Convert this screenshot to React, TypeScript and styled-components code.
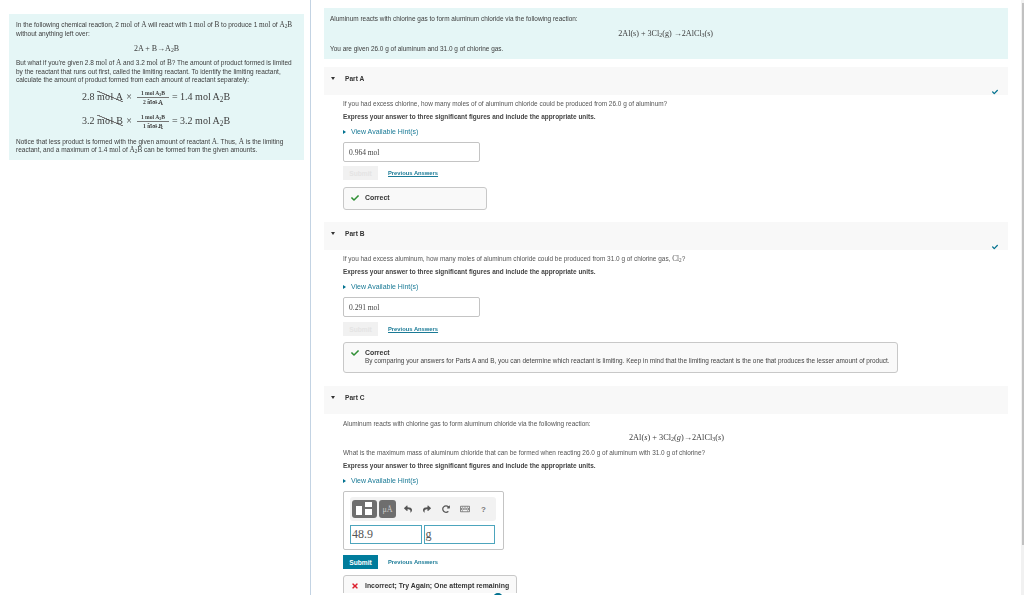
import React from "react";
import styled, { createGlobalStyle } from "styled-components";
import { FaCheck, FaTimes, FaReply, FaShare, FaRedoAlt, FaKeyboard } from "react-icons/fa";

const Global = createGlobalStyle`
  html, body { margin: 0; padding: 0; background: #fff; overflow: hidden; }
  #root { width: 1024px; height: 595px; overflow: hidden; }
  sub { font-size: 0.72em; line-height: 0; vertical-align: -0.25em; }
`;

const sans = `"Liberation Sans", Arial, sans-serif`;
const serif = `"Liberation Serif", "Times New Roman", serif`;

const Page = styled.div`
  position: relative;
  display: flex;
  width: 1024px;
  height: 595px;
  overflow: hidden;
  background: #fff;
  font-family: ${sans};
  color: #3c3c3c;
`;

const LeftCol = styled.aside`
  flex: 0 0 311px;
  box-sizing: border-box;
  border-right: 1px solid #c3d3e3;
  padding: 14px 6px 0 9px;
`;

const HintPanel = styled.div`
  box-sizing: border-box;
  height: 146px;
  background: #e5f6f6;
  padding: 7px 7px;
  font-size: 6.5px;
  line-height: 8.5px;
  filter: blur(0.3px);
`;

const PanelText = styled.div<{ $top?: number }>`
  margin: ${(p) => p.$top ?? 0}px 0 0;
`;

const PanelLine = styled.div`
  white-space: nowrap;
  height: 8.5px;
`;

const Serif = styled.span`
  font-family: ${serif};
  font-size: 1.12em;
`;

const CenterEq = styled.div`
  font-family: ${serif};
  font-size: 8px;
  line-height: 10px;
  text-align: center;
  margin: 6px 0 5px;
`;

const MathRow = styled.div<{ $top: number }>`
  display: flex;
  align-items: center;
  height: 24px;
  margin-top: ${(p) => p.$top}px;
  padding-left: 66px;
  gap: 3px;
  font-family: ${serif};
  font-size: 10px;
`;

const Struck = styled.span`
  letter-spacing: 0.3px;
  background: linear-gradient(to top right, transparent 47%, #777 48.5%, #777 52.5%, transparent 54%);
`;

const Frac = styled.span`
  display: inline-flex;
  flex-direction: column;
  align-items: center;
  font-size: 5.6px;
  line-height: 8px;
  font-weight: bold;
  margin-left: 2px;
`;

const FracTop = styled.span`
  border-bottom: 1px solid #777;
  padding: 0 4px;
`;

const Main = styled.main`
  flex: 1;
  min-width: 0;
  padding: 8px 16px 0 13px;
`;

const IntroPanel = styled.div`
  box-sizing: border-box;
  height: 51px;
  background: #e5f6f6;
  padding: 6px 6px;
  font-size: 6.45px;
  line-height: 9px;
  filter: blur(0.3px);
`;

const IntroEq = styled.div`
  font-family: ${serif};
  font-size: 8.1px;
  line-height: 10px;
  width: 383px;
  text-align: right;
  margin: 6px 0 5px;
`;

const PartHeader = styled.header<{ $top: number }>`
  position: relative;
  display: flex;
  align-items: flex-start;
  box-sizing: border-box;
  height: 28px;
  margin-top: ${(p) => p.$top}px;
  padding: 7px 0 0 7px;
  background: #f8f8f8;
`;

const Caret = styled.span`
  width: 0;
  height: 0;
  margin: 3px 10px 0 0;
  border-left: 2.5px solid transparent;
  border-right: 2.5px solid transparent;
  border-top: 3px solid #333;
`;

const PartTitle = styled.h3`
  margin: 0;
  font-size: 6.6px;
  line-height: 9px;
  font-weight: bold;
  color: #333;
  filter: blur(0.2px);
`;

const DoneCheck = styled.span`
  position: absolute;
  right: 10px;
  bottom: 0;
  display: flex;
  color: #00718f;
  font-size: 6px;
`;

const PartBody = styled.section`
  padding-left: 19px;
`;

const Question = styled.p<{ $top?: number }>`
  margin: ${(p) => p.$top ?? 5}px 0 0;
  font-size: 6.45px;
  line-height: 8px;
  color: #555;
  filter: blur(0.3px);
`;

const Express = styled.p`
  margin: 5px 0 0;
  font-size: 6.45px;
  line-height: 8px;
  font-weight: bold;
  color: #444;
  filter: blur(0.2px);
`;

const HintLink = styled.div`
  display: flex;
  align-items: center;
  gap: 5px;
  margin-top: 7px;
  font-size: 7px;
  line-height: 8px;
  color: #1a7a96;
  filter: blur(0.2px);
`;

const HintCaret = styled.span`
  width: 0;
  height: 0;
  border-top: 2.5px solid transparent;
  border-bottom: 2.5px solid transparent;
  border-left: 3px solid #00718f;
`;

const AnswerBox = styled.div`
  box-sizing: border-box;
  width: 137px;
  height: 20px;
  margin-top: 6px;
  padding: 0 5px;
  display: flex;
  align-items: center;
  border: 1px solid #c4c4c4;
  border-radius: 2px;
  font-family: ${serif};
  font-size: 7.5px;
  color: #444;
  filter: blur(0.2px);
`;

const ActionRow = styled.div<{ $top: number }>`
  display: flex;
  align-items: center;
  gap: 10px;
  margin-top: ${(p) => p.$top}px;
`;

const SubmitButton = styled.button<{ $active?: boolean }>`
  box-sizing: border-box;
  width: 35px;
  height: 14px;
  padding: 0;
  border: 0;
  background: ${(p) => (p.$active ? "#007c9c" : "#f1f1f1")};
  color: ${(p) => (p.$active ? "#fff" : "#e4e4e4")};
  font-family: ${sans};
  font-size: 6.6px;
  font-weight: bold;
`;

const PrevLink = styled.a<{ $plain?: boolean }>`
  color: #1a7a96;
  font-size: 5.8px;
  font-weight: bold;
  line-height: 8px;
  text-decoration: ${(p) => (p.$plain ? "none" : "underline")};
  filter: blur(0.2px);
`;

const Feedback = styled.div<{ $width: number; $height: number; $top: number }>`
  box-sizing: border-box;
  display: flex;
  width: ${(p) => p.$width}px;
  height: ${(p) => p.$height}px;
  margin-top: ${(p) => p.$top}px;
  padding: 6px 7px;
  gap: 6px;
  border: 1px solid #c8c8c8;
  border-bottom-width: 1.5px;
  border-radius: 3px;
  background: #f9f9f9;
`;

const CheckMark = styled.span`
  display: flex;
  flex: 0 0 8px;
  height: 8px;
  align-items: center;
  color: #2f8f35;
  font-size: 8px;
`;

const CrossMark = styled(CheckMark)`
  color: #dd1f2d;
`;

const FeedbackText = styled.div`
  font-size: 6.45px;
  line-height: 7.6px;
  color: #444;
  filter: blur(0.2px);
`;

const FeedbackTitle = styled.div`
  font-size: 6.9px;
  font-weight: bold;
  color: #333;
  white-space: nowrap;
`;

const BlockEq = styled.div`
  font-family: ${serif};
  font-size: 8.3px;
  line-height: 10px;
  width: 381px;
  text-align: right;
  margin-top: 5px;
  filter: blur(0.2px);
`;

const Editor = styled.div`
  box-sizing: border-box;
  width: 161px;
  height: 59px;
  margin-top: 6px;
  padding: 5px 6px;
  border: 1px solid #c4c4c4;
  border-radius: 2px;
`;

const Toolbar = styled.div`
  display: flex;
  align-items: center;
  height: 24px;
  width: 146px;
  padding-left: 2px;
  box-sizing: border-box;
  background: #f2f2f2;
  border-radius: 3px;
  gap: 2px;
`;

const TemplateButton = styled.span`
  display: inline-flex;
  align-items: center;
  justify-content: center;
  width: 25px;
  height: 18px;
  border-radius: 3px;
  background: #6e6e6e;
`;

const UnitButton = styled.span`
  display: inline-flex;
  align-items: center;
  justify-content: center;
  width: 17px;
  height: 18px;
  border-radius: 3px;
  background: #6e6e6e;
  color: #cfcfcf;
  font-family: ${serif};
  font-size: 8px;
`;

const ToolIcons = styled.span`
  display: flex;
  align-items: center;
  color: #555;
  font-size: 8px;
`;

const ToolSlot = styled.span`
  display: flex;
  justify-content: center;
  width: 19px;
`;

const HelpMark = styled.span`
  font-size: 8px;
  font-weight: bold;
  color: #777;
`;

const InputRow = styled.div`
  display: flex;
  gap: 2px;
  margin-top: 4px;
  width: 145px;
`;

const MathInput = styled.div`
  box-sizing: border-box;
  flex: 1;
  height: 19px;
  padding: 0 1px;
  display: flex;
  align-items: center;
  border: 1px solid #4da5bd;
  font-family: ${serif};
  font-size: 12px;
  color: #555;
`;

const BottomBlip = styled.span`
  position: absolute;
  left: 493px;
  top: 593px;
  width: 10px;
  height: 5px;
  border-radius: 5px 5px 0 0;
  background: #00718f;
`;

const BottomCover = styled.span`
  position: absolute;
  left: 320px;
  right: 8px;
  top: 593px;
  height: 2px;
  background: #fff;
`;

const ScrollTrack = styled.div`
  position: absolute;
  top: 0;
  right: 0;
  width: 3px;
  height: 595px;
  background: #f1f1f1;
`;

const ScrollThumb = styled.div`
  margin-top: 3px;
  width: 2px;
  margin-left: 1px;
  height: 542px;
  background: #c1c1c1;
`;

const Express3 = () => <Express>Express your answer to three significant figures and include the appropriate units.</Express>;
const Hint = () => (
  <HintLink>
    <HintCaret />
    View Available Hint(s)
  </HintLink>
);

export default function App() {
  return (
    <Page>
      <Global />
      <LeftCol>
        <HintPanel>
          <PanelText>
            <PanelLine>In the following chemical reaction, 2 <Serif>mol</Serif> of <Serif>A</Serif> will react with 1 <Serif>mol</Serif> of <Serif>B</Serif> to produce 1 <Serif>mol</Serif> of <Serif>A<sub>2</sub>B</Serif></PanelLine>
            <PanelLine>without anything left over:</PanelLine>
          </PanelText>
          <CenterEq>2A + B→A<sub>2</sub>B</CenterEq>
          <PanelText>
            <PanelLine>But what if you're given 2.8 <Serif>mol</Serif> of <Serif>A</Serif> and 3.2 <Serif>mol</Serif> of <Serif>B</Serif>? The amount of product formed is limited</PanelLine>
            <PanelLine>by the reactant that runs out first, called the limiting reactant. To identify the limiting reactant,</PanelLine>
            <PanelLine>calculate the amount of product formed from each amount of reactant separately:</PanelLine>
          </PanelText>
          <MathRow $top={1}>
            <span>2.8 <Struck>mol A</Struck></span>
            <span>×</span>
            <Frac>
              <FracTop>1 mol A<sub>2</sub>B</FracTop>
              <span>2 <Struck>mol A</Struck></span>
            </Frac>
            <span>= 1.4 mol A<sub>2</sub>B</span>
          </MathRow>
          <MathRow $top={0}>
            <span>3.2 <Struck>mol B</Struck></span>
            <span>×</span>
            <Frac>
              <FracTop>1 mol A<sub>2</sub>B</FracTop>
              <span>1 <Struck>mol B</Struck></span>
            </Frac>
            <span>= 3.2 mol A<sub>2</sub>B</span>
          </MathRow>
          <PanelText $top={4}>
            <PanelLine>Notice that less product is formed with the given amount of reactant <Serif>A</Serif>. Thus, <Serif>A</Serif> is the limiting</PanelLine>
            <PanelLine>reactant, and a maximum of 1.4 <Serif>mol</Serif> of <Serif>A<sub>2</sub>B</Serif> can be formed from the given amounts.</PanelLine>
          </PanelText>
        </HintPanel>
      </LeftCol>
      <Main>
        <IntroPanel>
          <div>Aluminum reacts with chlorine gas to form aluminum chloride via the following reaction:</div>
          <IntroEq>2Al(s) + 3Cl<sub>2</sub>(g) →2AlCl<sub>3</sub>(s)</IntroEq>
          <div>You are given 26.0 g of aluminum and 31.0 g of chlorine gas.</div>
        </IntroPanel>

        <PartHeader $top={8}>
          <Caret />
          <PartTitle>Part A</PartTitle>
          <DoneCheck><FaCheck /></DoneCheck>
        </PartHeader>
        <PartBody>
          <Question>If you had excess chlorine, how many moles of of aluminum chloride could be produced from 26.0 g of aluminum?</Question>
          <Express3 />
          <Hint />
          <AnswerBox>0.964 mol</AnswerBox>
          <ActionRow $top={4}>
            <SubmitButton>Submit</SubmitButton>
            <PrevLink>Previous Answers</PrevLink>
          </ActionRow>
          <Feedback $width={144} $height={23} $top={7}>
            <CheckMark><FaCheck /></CheckMark>
            <FeedbackText><FeedbackTitle>Correct</FeedbackTitle></FeedbackText>
          </Feedback>
        </PartBody>

        <PartHeader $top={12}>
          <Caret />
          <PartTitle>Part B</PartTitle>
          <DoneCheck><FaCheck /></DoneCheck>
        </PartHeader>
        <PartBody>
          <Question>If you had excess aluminum, how many moles of aluminum chloride could be produced from 31.0 g of chlorine gas, <Serif>Cl<sub>2</sub></Serif>?</Question>
          <Express3 />
          <Hint />
          <AnswerBox>0.291 mol</AnswerBox>
          <ActionRow $top={5}>
            <SubmitButton>Submit</SubmitButton>
            <PrevLink>Previous Answers</PrevLink>
          </ActionRow>
          <Feedback $width={555} $height={31} $top={6}>
            <CheckMark><FaCheck /></CheckMark>
            <FeedbackText>
              <FeedbackTitle>Correct</FeedbackTitle>
              By comparing your answers for Parts A and B, you can determine which reactant is limiting. Keep in mind that the limiting reactant is the one that produces the lesser amount of product.
            </FeedbackText>
          </Feedback>
        </PartBody>

        <PartHeader $top={13}>
          <Caret />
          <PartTitle>Part C</PartTitle>
        </PartHeader>
        <PartBody>
          <Question $top={6}>Aluminum reacts with chlorine gas to form aluminum chloride via the following reaction:</Question>
          <BlockEq>2Al(<i>s</i>) + 3Cl<sub>2</sub>(<i>g</i>)→2AlCl<sub>3</sub>(<i>s</i>)</BlockEq>
          <Question $top={6}>What is the maximum mass of aluminum chloride that can be formed when reacting 26.0 g of aluminum with 31.0 g of chlorine?</Question>
          <Express3 />
          <Hint />
          <Editor>
            <Toolbar>
              <TemplateButton>
                <svg width="17" height="14" viewBox="0 0 17 14">
                  <rect x="0" y="4" width="6" height="9" fill="#fff" />
                  <rect x="9" y="0" width="7" height="5" fill="#fff" />
                  <rect x="9" y="7" width="7" height="6" fill="#fff" />
                </svg>
              </TemplateButton>
              <UnitButton>μÅ</UnitButton>
              <ToolIcons>
                <ToolSlot><FaReply /></ToolSlot>
                <ToolSlot><FaShare /></ToolSlot>
                <ToolSlot><FaRedoAlt /></ToolSlot>
                <ToolSlot><FaKeyboard color="#888" size={10} /></ToolSlot>
                <ToolSlot><HelpMark>?</HelpMark></ToolSlot>
              </ToolIcons>
            </Toolbar>
            <InputRow>
              <MathInput>48.9</MathInput>
              <MathInput>g</MathInput>
            </InputRow>
          </Editor>
          <ActionRow $top={5}>
            <SubmitButton $active>Submit</SubmitButton>
            <PrevLink $plain>Previous Answers</PrevLink>
          </ActionRow>
          <Feedback $width={174} $height={30} $top={6}>
            <CrossMark><FaTimes /></CrossMark>
            <FeedbackText><FeedbackTitle>Incorrect; Try Again; One attempt remaining</FeedbackTitle></FeedbackText>
          </Feedback>
        </PartBody>
      </Main>
      <BottomCover />
      <BottomBlip />
      <ScrollTrack><ScrollThumb /></ScrollTrack>
    </Page>
  );
}
